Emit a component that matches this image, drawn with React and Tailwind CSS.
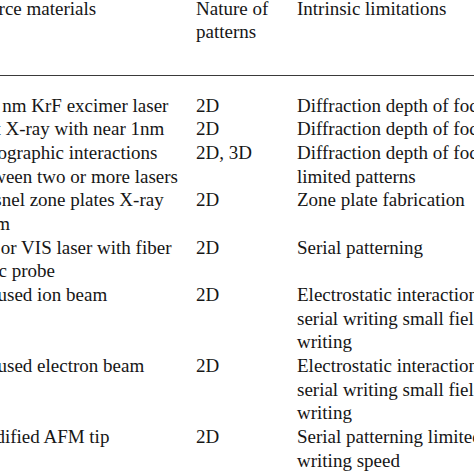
import React from 'react';

const rows = [
    { source: ['248 nm KrF excimer laser'], nature: '2D', limits: ['Diffraction depth of focus'] },
    { source: ['Soft X-ray with near 1nm'], nature: '2D', limits: ['Diffraction depth of focus'] },
    { source: ['Holographic interactions', 'between two or more lasers'], nature: '2D, 3D', limits: ['Diffraction depth of focus', 'limited patterns'] },
    { source: ['Fresnel zone plates X-ray', 'beam'], nature: '2D', limits: ['Zone plate fabrication'] },
    { source: ['UV or VIS laser with fiber', 'optic probe'], nature: '2D', limits: ['Serial patterning'] },
    { source: ['Focused ion beam'], nature: '2D', limits: ['Electrostatic interactions,', 'serial writing small field', 'writing'] },
    { source: ['Focused electron beam'], nature: '2D', limits: ['Electrostatic interactions,', 'serial writing small field', 'writing'] },
    { source: ['Modified AFM tip'], nature: '2D', limits: ['Serial patterning limited', 'writing speed'] },
];

// one cell, lines kept as the reference breaks them
const Cell = ({ lines }) => (
    <div className="whitespace-nowrap">
        {lines.map((line, i) => (
            <div key={i}>{line}</div>
        ))}
    </div>
);

const App = () => {
    return (
        <div
            className="w-[474px] h-[474px] overflow-hidden bg-white text-[#161616] text-[19px] leading-[23.65px]"
            style={{ fontFamily: '"Liberation Serif", "Times New Roman", serif' }}
        >
            <div className="-ml-[31px] -mt-[3.5px] w-[560px]">
                <div className="grid grid-cols-[227px_101px_1fr] pb-[31px]">
                    <Cell lines={['Source materials']} />
                    <Cell lines={['Nature of', 'patterns']} />
                    <Cell lines={['Intrinsic limitations']} />
                </div>
                <div className="h-[1.5px] bg-[#3a3a3a]" />
                <div className="pt-[17.5px]">
                    {rows.map((row, i) => (
                        <div key={i} className="grid grid-cols-[227px_101px_1fr]">
                            <Cell lines={row.source} />
                            <Cell lines={[row.nature]} />
                            <Cell lines={row.limits} />
                        </div>
                    ))}
                </div>
            </div>
        </div>
    );
};

export default App;
